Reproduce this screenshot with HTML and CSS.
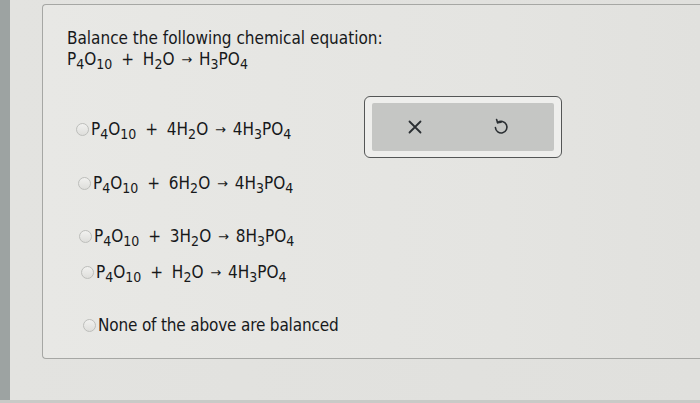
FILE: index.html
```html
<!DOCTYPE html>
<html>
<head>
<meta charset="utf-8">
<link rel="stylesheet" href="styles.css">
</head>
<body>
<div class="screen">
  <div class="bezel"></div>
  <div class="page">
    <div class="card">
      <div class="question">
        <div class="title">Balance the following chemical equation:</div>
        <div class="eq">P<sub>4</sub>O<sub>10</sub> <span class="op">+</span> H<sub>2</sub>O <span class="arrow">→</span> H<sub>3</sub>PO<sub>4</sub></div>
      </div>
      <div class="body">
        <div class="options">
          <label class="opt o1"><span class="radio"></span><span class="eq">P<sub>4</sub>O<sub>10</sub> <span class="op">+</span> 4H<sub>2</sub>O <span class="arrow">→</span> 4H<sub>3</sub>PO<sub>4</sub></span></label>
          <label class="opt o2"><span class="radio"></span><span class="eq">P<sub>4</sub>O<sub>10</sub> <span class="op">+</span> 6H<sub>2</sub>O <span class="arrow">→</span> 4H<sub>3</sub>PO<sub>4</sub></span></label>
          <label class="opt o3"><span class="radio"></span><span class="eq">P<sub>4</sub>O<sub>10</sub> <span class="op">+</span> 3H<sub>2</sub>O <span class="arrow">→</span> 8H<sub>3</sub>PO<sub>4</sub></span></label>
          <label class="opt o4"><span class="radio"></span><span class="eq">P<sub>4</sub>O<sub>10</sub> <span class="op">+</span> H<sub>2</sub>O <span class="arrow">→</span> 4H<sub>3</sub>PO<sub>4</sub></span></label>
          <label class="opt o5"><span class="radio"></span><span class="text">None of the above are balanced</span></label>
        </div>
        <div class="tools">
          <div class="tools-inner">
            <button class="tool" aria-label="Clear">
              <svg width="16" height="16" viewBox="0 0 16 16"><path d="M2.5 2.5 L13.5 13.5 M13.5 2.5 L2.5 13.5" stroke="#2a2e32" stroke-width="1.8" fill="none" stroke-linecap="round"/></svg>
            </button>
            <button class="tool" aria-label="Undo">
              <svg width="18" height="18" viewBox="0 0 18 18"><path d="M5.6 4.6 A5.8 5.8 0 1 1 3.4 9.5" stroke="#2a2e32" stroke-width="1.6" fill="none" stroke-linecap="round"/><path d="M4.6 1.6 L5.6 4.8 L9 4.2" stroke="#2a2e32" stroke-width="1.6" fill="none" stroke-linecap="round" stroke-linejoin="round"/></svg>
            </button>
          </div>
        </div>
      </div>
    </div>
  </div>
</div>
</body>
</html>
```

FILE: styles.css
```css
html, body {
  margin: 0;
  padding: 0;
}
body {
  width: 700px;
  height: 403px;
  overflow: hidden;
  background: #e2e2df;
  font-family: "DejaVu Sans Condensed", "DejaVu Sans", Verdana, sans-serif;
  color: #17191b;
}
.screen {
  display: flex;
  height: 400px;
  border-bottom: 3px solid #c9cac7;
}
.bezel {
  width: 10px;
  background: #9da3a2;
}
.page {
  flex: 1;
  padding: 4px 0 0 32px;
  background: linear-gradient(90deg, #e3e3e0, #e0e0dd);
}
.card {
  height: 355px;
  box-sizing: border-box;
  border: 1px solid #a6a7a4;
  border-right: none;
  border-radius: 4px 0 0 4px;
  background: linear-gradient(90deg, #e8e8e5, #e4e4e1 70%, #e1e1de);
  padding: 23px 0 0 24px;
}
.title, .question .eq {
  font-size: 17px;
  line-height: 20px;
}
.question .eq {
  margin-top: 1px;
}
.eq sub {
  font-size: 14px;
  vertical-align: -4px;
  line-height: 0;
}
.op {
  margin: 0 4px;
}
.arrow {
  font-family: "DejaVu Sans", sans-serif;
  font-size: 13px;
  vertical-align: 1px;
  margin: 0 2px;
}
.body {
  display: flex;
  align-items: flex-start;
}
.options {
  display: flex;
  flex-direction: column;
  padding-top: 49px;
  width: 297px;
}
.opt {
  display: flex;
  align-items: center;
  font-size: 17px;
  line-height: 20px;
  height: 20px;
}
.opt .radio {
  width: 13px;
  height: 13px;
  box-sizing: border-box;
  border: 1px solid #bdbebb;
  border-radius: 50%;
  background: linear-gradient(#f1f1ef, #dededb);
  margin-right: 2px;
  flex: none;
}
.o5 .text {
  letter-spacing: -0.17px;
}
.o1 { padding-left: 9px; }
.o2 { margin-top: 34px; padding-left: 11px; }
.o3 { margin-top: 33px; padding-left: 12px; }
.o4 { margin-top: 16px; padding-left: 14px; }
.o5 { margin-top: 33px; padding-left: 16px; }
.tools {
  margin-top: 26px;
  width: 198px;
  height: 62px;
  box-sizing: border-box;
  border: 1px solid #545656;
  border-radius: 6px;
  background: #eeeeec;
  padding: 6px 7px;
}
.tools-inner {
  height: 48px;
  background: #c5c6c4;
  border-radius: 2px;
  display: flex;
  align-items: center;
  justify-content: space-around;
  padding: 0 10px 0 0;
}
.tool {
  border: none;
  background: none;
  padding: 0;
  display: flex;
  align-items: center;
  justify-content: center;
  width: 30px;
  height: 30px;
}
```
